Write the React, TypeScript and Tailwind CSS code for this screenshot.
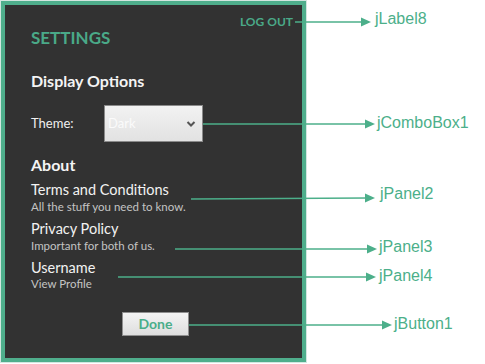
import React from 'react';

const green = '#4caf8a';

type Callout = { label: string; x1: number; y1: number; x2: number; y2: number; tx: number; ty: number };

const callouts: Callout[] = [
  { label: 'jLabel8', x1: 295, y1: 22, x2: 371, y2: 22, tx: 375, ty: 11 },
  { label: 'jComboBox1', x1: 203, y1: 124, x2: 375, y2: 124, tx: 377, ty: 115 },
  { label: 'jPanel2', x1: 191, y1: 199, x2: 375, y2: 198, tx: 380, ty: 186 },
  { label: 'jPanel3', x1: 175, y1: 249, x2: 377, y2: 249, tx: 379, ty: 239 },
  { label: 'jPanel4', x1: 118, y1: 277, x2: 376, y2: 277, tx: 379, ty: 268 },
  { label: 'jButton1', x1: 189, y1: 325, x2: 392, y2: 325, tx: 394, ty: 316 },
];

const Arrows = () => (
  <svg className="absolute inset-0 pointer-events-none" width={485} height={364}>
    {callouts.map(c => (
      <g key={c.label}>
        <line x1={c.x1} y1={c.y1} x2={c.x2 - 8} y2={c.y2} stroke={green} strokeWidth={1.3} />
        <polygon points={`${c.x2},${c.y2} ${c.x2 - 10},${c.y2 - 4.5} ${c.x2 - 10},${c.y2 + 4.5}`} fill={green} />
      </g>
    ))}
  </svg>
);

const LinkItem = ({ title, sub, gap = 'mt-[4px]' }: { title: string; sub: string; gap?: string }) => (
  <div className="mt-[10px]">
    <div className="text-[14.5px] leading-[14px] text-[#f2f2f2]">{title}</div>
    <div className={`${gap} text-[11.5px] leading-[11px] text-[#c4c4c4]`}>{sub}</div>
  </div>
);

export default function App() {
  return (
    <div className="relative w-[485px] h-[364px] bg-white overflow-hidden" style={{ fontFamily: 'Lato, "Open Sans", sans-serif' }}>
      {/* settings panel */}
      <div className="w-[307px] h-[363px] bg-[#d3e6e0] p-px">
        <div className="h-full border-4 border-[#4fae8c] bg-[#323232] pl-[26px] pr-[9px] pt-[11px]">
          <div className="flex justify-end">
            <span className="text-[12px] leading-[12px] font-bold text-[#4aa988]">LOG OUT</span>
          </div>
          <h1 className="mt-px text-[17px] leading-[18px] font-bold text-[#4aa988]">SETTINGS</h1>

          <h2 className="mt-[26px] text-[16px] leading-[16px] font-bold text-[#f4f4f4]">Display Options</h2>

          <div className="mt-[16px] flex items-center">
            <span className="w-[73px] text-[13px] leading-[13px] text-[#f0f0f0]">Theme:</span>
            <div className="w-[99px] h-[37px] border border-[#8a8a8a] bg-gradient-to-b from-[#f2f2f2] to-[#e2e2e2] flex items-center justify-between pl-[3px] pr-[6px]">
              <span className="text-[13px] leading-[13px] text-[#fbfbfb]">Dark</span>
              <svg width="10" height="8" viewBox="0 0 10 8">
                <path d="M1.5 2 L5 5.5 L8.5 2" fill="none" stroke="#555" strokeWidth="2" />
              </svg>
            </div>
          </div>

          <h2 className="mt-[15px] text-[16px] leading-[16px] font-bold text-[#f4f4f4]">About</h2>

          <LinkItem title="Terms and Conditions" sub="All the stuff you need to know." />
          <LinkItem title="Privacy Policy" sub="Important for both of us." />
          <LinkItem title="Username" sub="View Profile" gap="mt-[3px]" />

          <button className="mt-[23px] ml-[91px] w-[67px] h-[24px] border border-[#8f8f8f] bg-gradient-to-b from-[#f4f4f4] to-[#dedede] text-[14px] leading-[14px] font-bold text-[#4aae8a]">
            Done
          </button>
        </div>
      </div>

      <Arrows />
      {callouts.map(c => (
        <span
          key={c.label}
          className="absolute text-[16px] leading-[16px] text-[#4caf8a] whitespace-nowrap"
          style={{ left: c.tx, top: c.ty, fontFamily: '"Liberation Sans", Arial, sans-serif' }}
        >
          {c.label}
        </span>
      ))}
    </div>
  );
}
